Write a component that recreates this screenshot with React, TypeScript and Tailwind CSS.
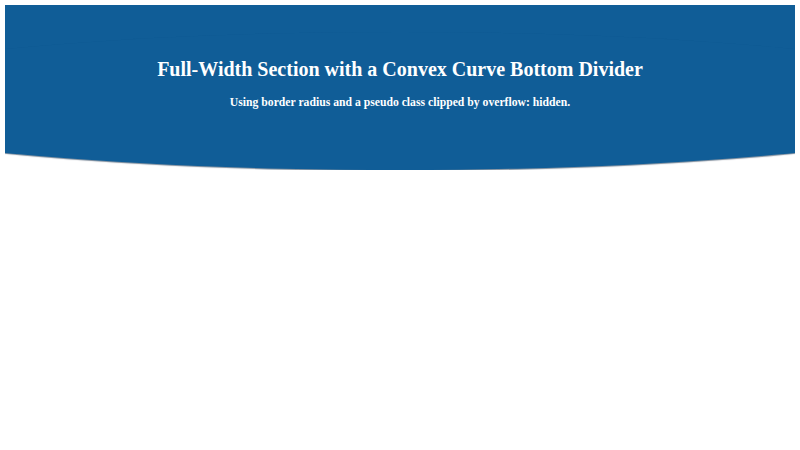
export default function App() {
  return (
    <div className="min-h-[450px] bg-white p-[5px] font-['Liberation_Serif',serif]">
      {/* Hero band; the curved edge is a wide ellipse clipped by the section */}
      <section className="relative h-[165px] overflow-hidden">
        <div className="relative z-10 h-[148px] bg-[#105d97] pt-[53px] text-center text-white after:absolute after:left-[-205px] after:top-[27px] after:-z-10 after:h-[138px] after:w-[1200px] after:rounded-[50%] after:bg-[#105d97] after:shadow-[0_1px_1px_rgba(0,30,60,0.5)] after:content-['']">
          <h2 className="text-[20px] font-bold leading-[23px]">
            Full-Width Section with a Convex Curve Bottom Divider
          </h2>
          <p className="mt-[15px] text-[11.7px] font-bold leading-[14px]">
            Using border radius and a pseudo class clipped by overflow: hidden.
          </p>
        </div>
      </section>
    </div>
  );
}
